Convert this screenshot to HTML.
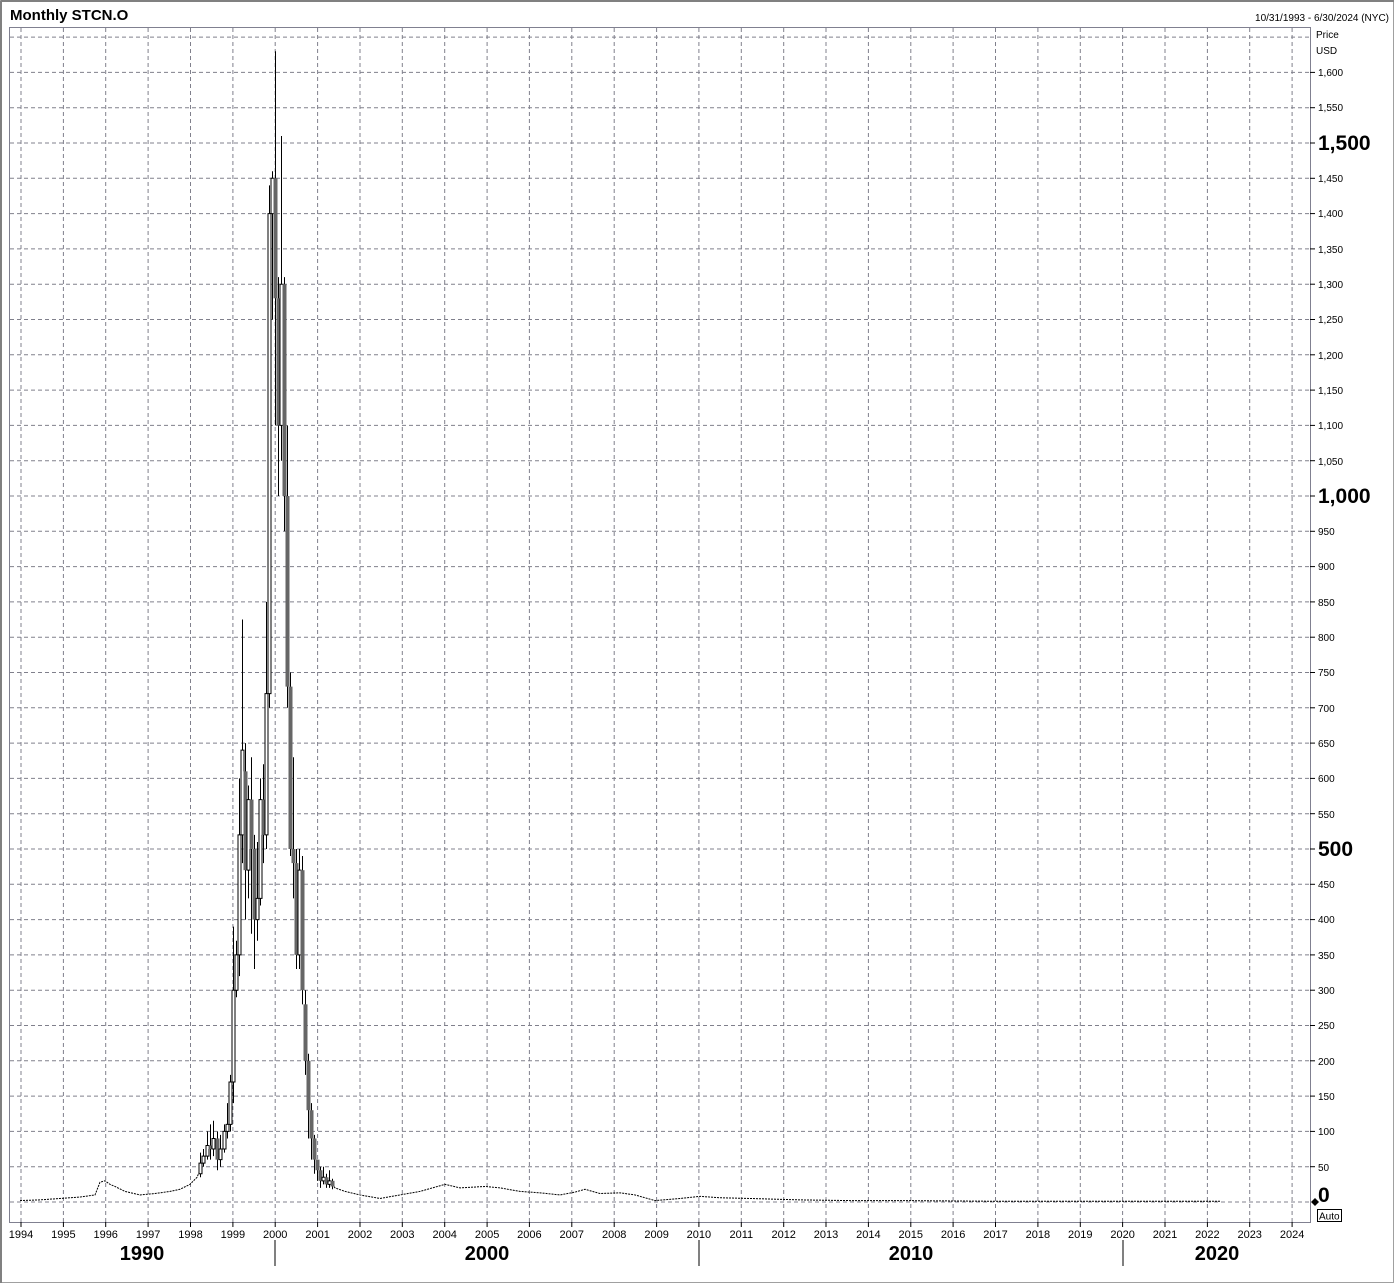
<!DOCTYPE html>
<html><head><meta charset="utf-8"><style>
html,body{margin:0;padding:0;background:#fff;}
body{width:1395px;height:1285px;overflow:hidden;position:relative;font-family:"Liberation Sans",Arial,sans-serif;}
svg{position:absolute;left:0;top:0}
.g line{stroke:#80808c;stroke-dasharray:4,3}
.c line{stroke:#000;stroke-width:1;vector-effect:non-scaling-stroke}
.c .u{fill:#fff;stroke:#000;stroke-width:1;vector-effect:non-scaling-stroke}
.c .d{fill:#666}
text{font-family:"Liberation Sans",Arial,sans-serif}
.yl{font-size:10px}
.yb{font-size:21px;font-weight:bold}
.xl{font-size:11px;text-anchor:middle}
.dl{font-size:20px;font-weight:bold;text-anchor:middle}
</style></head><body>
<svg width="1395" height="1285" xmlns="http://www.w3.org/2000/svg">
<rect x="0.5" y="0.5" width="1393" height="1282" fill="#fff" stroke="#a0a0a0"/>
<line x1="1" y1="1" x2="1" y2="1283" stroke="#808080" stroke-width="2"/>
<line x1="1" y1="1" x2="1394" y2="1" stroke="#808080" stroke-width="2"/>
<text x="10" y="20" font-size="15" font-weight="bold">Monthly STCN.O</text>
<text x="1389" y="21" font-size="10" text-anchor="end">10/31/1993 - 6/30/2024 (NYC)</text>
<text x="1316" y="38" class="yl">Price</text>
<text x="1316" y="54" class="yl">USD</text>

<g class="g">
<line x1="10" x2="1310" y1="37.1" y2="37.1"/>
<line x1="10" x2="1310" y1="72.4" y2="72.4"/>
<line x1="10" x2="1310" y1="107.7" y2="107.7"/>
<line x1="10" x2="1310" y1="143" y2="143"/>
<line x1="10" x2="1310" y1="178.3" y2="178.3"/>
<line x1="10" x2="1310" y1="213.6" y2="213.6"/>
<line x1="10" x2="1310" y1="248.9" y2="248.9"/>
<line x1="10" x2="1310" y1="284.2" y2="284.2"/>
<line x1="10" x2="1310" y1="319.5" y2="319.5"/>
<line x1="10" x2="1310" y1="354.8" y2="354.8"/>
<line x1="10" x2="1310" y1="390.1" y2="390.1"/>
<line x1="10" x2="1310" y1="425.4" y2="425.4"/>
<line x1="10" x2="1310" y1="460.7" y2="460.7"/>
<line x1="10" x2="1310" y1="496" y2="496"/>
<line x1="10" x2="1310" y1="531.3" y2="531.3"/>
<line x1="10" x2="1310" y1="566.6" y2="566.6"/>
<line x1="10" x2="1310" y1="601.9" y2="601.9"/>
<line x1="10" x2="1310" y1="637.2" y2="637.2"/>
<line x1="10" x2="1310" y1="672.5" y2="672.5"/>
<line x1="10" x2="1310" y1="707.8" y2="707.8"/>
<line x1="10" x2="1310" y1="743.1" y2="743.1"/>
<line x1="10" x2="1310" y1="778.4" y2="778.4"/>
<line x1="10" x2="1310" y1="813.7" y2="813.7"/>
<line x1="10" x2="1310" y1="849" y2="849"/>
<line x1="10" x2="1310" y1="884.3" y2="884.3"/>
<line x1="10" x2="1310" y1="919.6" y2="919.6"/>
<line x1="10" x2="1310" y1="954.9" y2="954.9"/>
<line x1="10" x2="1310" y1="990.2" y2="990.2"/>
<line x1="10" x2="1310" y1="1025.5" y2="1025.5"/>
<line x1="10" x2="1310" y1="1060.8" y2="1060.8"/>
<line x1="10" x2="1310" y1="1096.1" y2="1096.1"/>
<line x1="10" x2="1310" y1="1131.4" y2="1131.4"/>
<line x1="10" x2="1310" y1="1166.7" y2="1166.7"/>
<line x1="10" x2="1310" y1="1202" y2="1202"/>
<line x1="21" x2="21" y1="28" y2="1222"/>
<line x1="63.4" x2="63.4" y1="28" y2="1222"/>
<line x1="105.7" x2="105.7" y1="28" y2="1222"/>
<line x1="148.1" x2="148.1" y1="28" y2="1222"/>
<line x1="190.5" x2="190.5" y1="28" y2="1222"/>
<line x1="232.9" x2="232.9" y1="28" y2="1222"/>
<line x1="275.2" x2="275.2" y1="28" y2="1222"/>
<line x1="317.6" x2="317.6" y1="28" y2="1222"/>
<line x1="360" x2="360" y1="28" y2="1222"/>
<line x1="402.3" x2="402.3" y1="28" y2="1222"/>
<line x1="444.7" x2="444.7" y1="28" y2="1222"/>
<line x1="487.1" x2="487.1" y1="28" y2="1222"/>
<line x1="529.4" x2="529.4" y1="28" y2="1222"/>
<line x1="571.8" x2="571.8" y1="28" y2="1222"/>
<line x1="614.2" x2="614.2" y1="28" y2="1222"/>
<line x1="656.6" x2="656.6" y1="28" y2="1222"/>
<line x1="698.9" x2="698.9" y1="28" y2="1222"/>
<line x1="741.3" x2="741.3" y1="28" y2="1222"/>
<line x1="783.7" x2="783.7" y1="28" y2="1222"/>
<line x1="826" x2="826" y1="28" y2="1222"/>
<line x1="868.4" x2="868.4" y1="28" y2="1222"/>
<line x1="910.8" x2="910.8" y1="28" y2="1222"/>
<line x1="953.1" x2="953.1" y1="28" y2="1222"/>
<line x1="995.5" x2="995.5" y1="28" y2="1222"/>
<line x1="1037.9" x2="1037.9" y1="28" y2="1222"/>
<line x1="1080.3" x2="1080.3" y1="28" y2="1222"/>
<line x1="1122.6" x2="1122.6" y1="28" y2="1222"/>
<line x1="1165" x2="1165" y1="28" y2="1222"/>
<line x1="1207.4" x2="1207.4" y1="28" y2="1222"/>
<line x1="1249.7" x2="1249.7" y1="28" y2="1222"/>
<line x1="1292.1" x2="1292.1" y1="28" y2="1222"/>
</g>
<rect x="9.5" y="27.5" width="1301" height="1195" fill="none" stroke="#808090"/>

<g class="c" transform="translate(0,1202) scale(1,-0.706)">
<polyline fill="none" stroke="#000" stroke-width="1" stroke-dasharray="2,1" vector-effect="non-scaling-stroke" points="20,2 40,3 60,5 80,7 95,10 100,28 105,30 110,25 115,22 125,15 140,10 155,12 170,15 180,18 190,25 197,35 200,45"/>
<polyline fill="none" stroke="#000" stroke-width="1" stroke-dasharray="2,1" vector-effect="non-scaling-stroke" points="332,25 335,20 345,15 360,10 380,5 400,10 420,15 445,25 460,20 485,22 500,20 520,15 540,13 560,10 575,14 585,18 600,12 620,13 635,10 655,2 680,5 700,8 720,6 750,5 800,3 850,2 900,2 1000,1 1220,1"/>
<line x1="200.5" x2="200.5" y1="35" y2="70"/><rect class="u" x="199" y="40" width="3" height="15"/>
<line x1="203.5" x2="203.5" y1="50" y2="75"/><rect class="u" x="202" y="55" width="3" height="10"/>
<line x1="207.5" x2="207.5" y1="60" y2="100"/><rect class="u" x="206" y="65" width="3" height="15"/>
<line x1="210.5" x2="210.5" y1="60" y2="110"/><rect class="d" x="208.5" y="75" width="4" height="5"/>
<line x1="213.5" x2="213.5" y1="65" y2="115"/><rect class="u" x="212" y="75" width="3" height="15"/>
<line x1="217.5" x2="217.5" y1="45" y2="100"/><rect class="d" x="215.5" y="60" width="4" height="30"/>
<line x1="220.5" x2="220.5" y1="50" y2="95"/><rect class="u" x="219" y="60" width="3" height="15"/>
<line x1="224.5" x2="224.5" y1="70" y2="110"/><rect class="u" x="223" y="75" width="3" height="25"/>
<line x1="227.5" x2="227.5" y1="90" y2="140"/><rect class="u" x="226" y="100" width="3" height="10"/>
<line x1="230.5" x2="230.5" y1="100" y2="180"/><rect class="u" x="229" y="110" width="3" height="60"/>
<line x1="233.5" x2="233.5" y1="140" y2="390"/><rect class="u" x="232" y="170" width="3" height="130"/>
<line x1="236.5" x2="236.5" y1="290" y2="370"/><rect class="u" x="235" y="300" width="3" height="50"/>
<line x1="239.5" x2="239.5" y1="320" y2="600"/><rect class="u" x="238" y="350" width="3" height="170"/>
<line x1="242.5" x2="242.5" y1="480" y2="825"/><rect class="u" x="241" y="520" width="3" height="120"/>
<line x1="245.5" x2="245.5" y1="400" y2="650"/><rect class="d" x="243.5" y="470" width="4" height="140"/>
<line x1="248.5" x2="248.5" y1="430" y2="590"/><rect class="u" x="247" y="470" width="3" height="100"/>
<line x1="251.5" x2="251.5" y1="380" y2="630"/><rect class="d" x="249.5" y="500" width="4" height="70"/>
<line x1="254.5" x2="254.5" y1="330" y2="520"/><rect class="d" x="252.5" y="400" width="4" height="100"/>
<line x1="257.5" x2="257.5" y1="370" y2="510"/><rect class="u" x="256" y="400" width="3" height="30"/>
<line x1="260.5" x2="260.5" y1="420" y2="600"/><rect class="u" x="259" y="430" width="3" height="140"/>
<line x1="263.5" x2="263.5" y1="480" y2="620"/><rect class="d" x="261.5" y="520" width="4" height="50"/>
<line x1="266.5" x2="266.5" y1="500" y2="850"/><rect class="u" x="265" y="520" width="3" height="200"/>
<line x1="269.5" x2="269.5" y1="700" y2="1440"/><rect class="u" x="268" y="720" width="3" height="680"/>
<line x1="272.5" x2="272.5" y1="1250" y2="1460"/><rect class="u" x="271" y="1400" width="3" height="50"/>
<line x1="275.5" x2="275.5" y1="1100" y2="1630"/><rect class="d" x="273.5" y="1280" width="4" height="170"/>
<line x1="278.5" x2="278.5" y1="1000" y2="1310"/><rect class="d" x="276.5" y="1100" width="4" height="180"/>
<line x1="281.5" x2="281.5" y1="1050" y2="1510"/><rect class="u" x="280" y="1100" width="3" height="200"/>
<line x1="284.5" x2="284.5" y1="950" y2="1310"/><rect class="d" x="282.5" y="1000" width="4" height="300"/>
<line x1="287.5" x2="287.5" y1="700" y2="1100"/><rect class="d" x="285.5" y="730" width="4" height="270"/>
<line x1="290.5" x2="290.5" y1="490" y2="750"/><rect class="d" x="288.5" y="500" width="4" height="230"/>
<line x1="293.5" x2="293.5" y1="430" y2="630"/><rect class="d" x="291.5" y="480" width="4" height="20"/>
<line x1="296.5" x2="296.5" y1="330" y2="500"/><rect class="d" x="294.5" y="350" width="4" height="130"/>
<line x1="299.5" x2="299.5" y1="330" y2="500"/><rect class="u" x="298" y="350" width="3" height="120"/>
<line x1="302.5" x2="302.5" y1="280" y2="490"/><rect class="d" x="300.5" y="300" width="4" height="170"/>
<line x1="305.5" x2="305.5" y1="180" y2="300"/><rect class="d" x="303.5" y="200" width="4" height="80"/>
<line x1="308.5" x2="308.5" y1="90" y2="210"/><rect class="d" x="306.5" y="130" width="4" height="70"/>
<line x1="311.5" x2="311.5" y1="60" y2="140"/><rect class="d" x="309.5" y="90" width="4" height="40"/>
<line x1="314.5" x2="314.5" y1="40" y2="95"/><rect class="d" x="312.5" y="60" width="4" height="30"/>
<line x1="317.5" x2="317.5" y1="30" y2="60"/><rect class="d" x="315.5" y="45" width="4" height="15"/>
<line x1="320.5" x2="320.5" y1="20" y2="50"/><rect class="d" x="318.5" y="30" width="4" height="15"/>
<line x1="323.5" x2="323.5" y1="25" y2="50"/><rect class="u" x="322" y="30" width="3" height="5"/>
<line x1="326.5" x2="326.5" y1="20" y2="40"/><rect class="d" x="324.5" y="25" width="4" height="10"/>
<line x1="329.5" x2="329.5" y1="20" y2="45"/><rect class="u" x="328" y="25" width="3" height="5"/>
<line x1="332.5" x2="332.5" y1="18" y2="33"/><rect class="d" x="330.5" y="22" width="4" height="8"/>
</g>

<g stroke="#000">
<line x1="1310" x2="1315" y1="72.4" y2="72.4"/><line x1="1310" x2="1315" y1="107.7" y2="107.7"/><line x1="1310" x2="1315" y1="143" y2="143"/><line x1="1310" x2="1315" y1="178.3" y2="178.3"/><line x1="1310" x2="1315" y1="213.6" y2="213.6"/><line x1="1310" x2="1315" y1="248.9" y2="248.9"/><line x1="1310" x2="1315" y1="284.2" y2="284.2"/><line x1="1310" x2="1315" y1="319.5" y2="319.5"/><line x1="1310" x2="1315" y1="354.8" y2="354.8"/><line x1="1310" x2="1315" y1="390.1" y2="390.1"/><line x1="1310" x2="1315" y1="425.4" y2="425.4"/><line x1="1310" x2="1315" y1="460.7" y2="460.7"/><line x1="1310" x2="1315" y1="496" y2="496"/><line x1="1310" x2="1315" y1="531.3" y2="531.3"/><line x1="1310" x2="1315" y1="566.6" y2="566.6"/><line x1="1310" x2="1315" y1="601.9" y2="601.9"/><line x1="1310" x2="1315" y1="637.2" y2="637.2"/><line x1="1310" x2="1315" y1="672.5" y2="672.5"/><line x1="1310" x2="1315" y1="707.8" y2="707.8"/><line x1="1310" x2="1315" y1="743.1" y2="743.1"/><line x1="1310" x2="1315" y1="778.4" y2="778.4"/><line x1="1310" x2="1315" y1="813.7" y2="813.7"/><line x1="1310" x2="1315" y1="849" y2="849"/><line x1="1310" x2="1315" y1="884.3" y2="884.3"/><line x1="1310" x2="1315" y1="919.6" y2="919.6"/><line x1="1310" x2="1315" y1="954.9" y2="954.9"/><line x1="1310" x2="1315" y1="990.2" y2="990.2"/><line x1="1310" x2="1315" y1="1025.5" y2="1025.5"/><line x1="1310" x2="1315" y1="1060.8" y2="1060.8"/><line x1="1310" x2="1315" y1="1096.1" y2="1096.1"/><line x1="1310" x2="1315" y1="1131.4" y2="1131.4"/><line x1="1310" x2="1315" y1="1166.7" y2="1166.7"/>
</g>
<text x="1318" y="76" class="yl">1,600</text>
<text x="1318" y="111" class="yl">1,550</text>
<text x="1318" y="150" class="yb">1,500</text>
<text x="1318" y="182" class="yl">1,450</text>
<text x="1318" y="217" class="yl">1,400</text>
<text x="1318" y="253" class="yl">1,350</text>
<text x="1318" y="288" class="yl">1,300</text>
<text x="1318" y="323" class="yl">1,250</text>
<text x="1318" y="359" class="yl">1,200</text>
<text x="1318" y="394" class="yl">1,150</text>
<text x="1318" y="429" class="yl">1,100</text>
<text x="1318" y="465" class="yl">1,050</text>
<text x="1318" y="503" class="yb">1,000</text>
<text x="1318" y="535" class="yl">950</text>
<text x="1318" y="570" class="yl">900</text>
<text x="1318" y="606" class="yl">850</text>
<text x="1318" y="641" class="yl">800</text>
<text x="1318" y="676" class="yl">750</text>
<text x="1318" y="712" class="yl">700</text>
<text x="1318" y="747" class="yl">650</text>
<text x="1318" y="782" class="yl">600</text>
<text x="1318" y="818" class="yl">550</text>
<text x="1318" y="856" class="yb">500</text>
<text x="1318" y="888" class="yl">450</text>
<text x="1318" y="923" class="yl">400</text>
<text x="1318" y="959" class="yl">350</text>
<text x="1318" y="994" class="yl">300</text>
<text x="1318" y="1029" class="yl">250</text>
<text x="1318" y="1065" class="yl">200</text>
<text x="1318" y="1100" class="yl">150</text>
<text x="1318" y="1135" class="yl">100</text>
<text x="1318" y="1171" class="yl">50</text>
<text x="1318" y="1202" class="yb">0</text>

<g stroke="#000">
<line x1="21" x2="21" y1="1222" y2="1227"/><line x1="63.4" x2="63.4" y1="1222" y2="1227"/><line x1="105.7" x2="105.7" y1="1222" y2="1227"/><line x1="148.1" x2="148.1" y1="1222" y2="1227"/><line x1="190.5" x2="190.5" y1="1222" y2="1227"/><line x1="232.9" x2="232.9" y1="1222" y2="1227"/><line x1="275.2" x2="275.2" y1="1222" y2="1227"/><line x1="317.6" x2="317.6" y1="1222" y2="1227"/><line x1="360" x2="360" y1="1222" y2="1227"/><line x1="402.3" x2="402.3" y1="1222" y2="1227"/><line x1="444.7" x2="444.7" y1="1222" y2="1227"/><line x1="487.1" x2="487.1" y1="1222" y2="1227"/><line x1="529.4" x2="529.4" y1="1222" y2="1227"/><line x1="571.8" x2="571.8" y1="1222" y2="1227"/><line x1="614.2" x2="614.2" y1="1222" y2="1227"/><line x1="656.6" x2="656.6" y1="1222" y2="1227"/><line x1="698.9" x2="698.9" y1="1222" y2="1227"/><line x1="741.3" x2="741.3" y1="1222" y2="1227"/><line x1="783.7" x2="783.7" y1="1222" y2="1227"/><line x1="826" x2="826" y1="1222" y2="1227"/><line x1="868.4" x2="868.4" y1="1222" y2="1227"/><line x1="910.8" x2="910.8" y1="1222" y2="1227"/><line x1="953.1" x2="953.1" y1="1222" y2="1227"/><line x1="995.5" x2="995.5" y1="1222" y2="1227"/><line x1="1037.9" x2="1037.9" y1="1222" y2="1227"/><line x1="1080.3" x2="1080.3" y1="1222" y2="1227"/><line x1="1122.6" x2="1122.6" y1="1222" y2="1227"/><line x1="1165" x2="1165" y1="1222" y2="1227"/><line x1="1207.4" x2="1207.4" y1="1222" y2="1227"/><line x1="1249.7" x2="1249.7" y1="1222" y2="1227"/><line x1="1292.1" x2="1292.1" y1="1222" y2="1227"/>
<line x1="275" x2="275" y1="1240" y2="1266"/><line x1="699" x2="699" y1="1240" y2="1266"/><line x1="1123" x2="1123" y1="1240" y2="1266"/>
</g>
<text x="21" y="1238" class="xl">1994</text><text x="63.4" y="1238" class="xl">1995</text><text x="105.7" y="1238" class="xl">1996</text><text x="148.1" y="1238" class="xl">1997</text><text x="190.5" y="1238" class="xl">1998</text><text x="232.9" y="1238" class="xl">1999</text><text x="275.2" y="1238" class="xl">2000</text><text x="317.6" y="1238" class="xl">2001</text><text x="360" y="1238" class="xl">2002</text><text x="402.3" y="1238" class="xl">2003</text><text x="444.7" y="1238" class="xl">2004</text><text x="487.1" y="1238" class="xl">2005</text><text x="529.4" y="1238" class="xl">2006</text><text x="571.8" y="1238" class="xl">2007</text><text x="614.2" y="1238" class="xl">2008</text><text x="656.6" y="1238" class="xl">2009</text><text x="698.9" y="1238" class="xl">2010</text><text x="741.3" y="1238" class="xl">2011</text><text x="783.7" y="1238" class="xl">2012</text><text x="826" y="1238" class="xl">2013</text><text x="868.4" y="1238" class="xl">2014</text><text x="910.8" y="1238" class="xl">2015</text><text x="953.1" y="1238" class="xl">2016</text><text x="995.5" y="1238" class="xl">2017</text><text x="1037.9" y="1238" class="xl">2018</text><text x="1080.3" y="1238" class="xl">2019</text><text x="1122.6" y="1238" class="xl">2020</text><text x="1165" y="1238" class="xl">2021</text><text x="1207.4" y="1238" class="xl">2022</text><text x="1249.7" y="1238" class="xl">2023</text><text x="1292.1" y="1238" class="xl">2024</text>
<text x="142" y="1260" class="dl">1990</text><text x="487" y="1260" class="dl">2000</text><text x="911" y="1260" class="dl">2010</text><text x="1217" y="1260" class="dl">2020</text>
<rect x="1317.5" y="1209.5" width="24" height="12" fill="#fff" stroke="#000"/>
<text x="1319" y="1219.5" font-size="10">Auto</text>
<path d="M1311 1202 l4 -4 l4 4 l-4 4z" fill="#000"/>
</svg>
</body></html>
